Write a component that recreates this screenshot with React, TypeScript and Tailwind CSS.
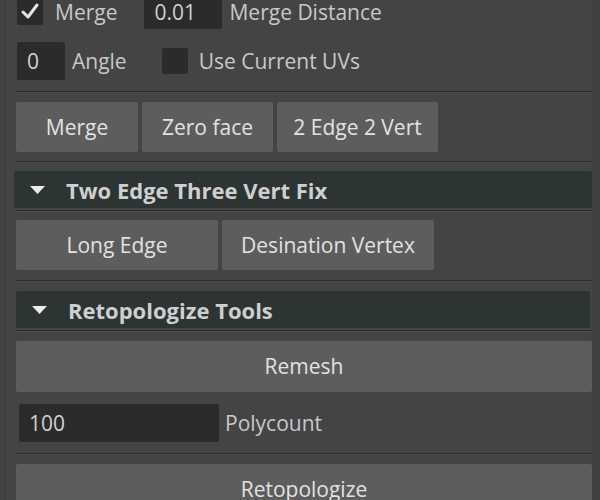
import React from 'react';

const font = { fontFamily: '"Open Sans", "Noto Sans", "Liberation Sans", sans-serif' };

function CheckBox({ checked }: { checked?: boolean }) {
    return (
        <div className="w-[26px] h-[26px] bg-[#2b2b2b] rounded-[2px] flex items-center justify-center shrink-0">
            {checked && (
                <svg width="20" height="20" viewBox="0 0 20 20">
                    <polyline points="3,10 8,15 17,3" fill="none" stroke="#e6e6e6" strokeWidth="3" strokeLinecap="round" strokeLinejoin="round" />
                </svg>
            )}
        </div>
    );
}

function Field({ value, className }: { value: string; className: string }) {
    return (
        <div className={`bg-[#2b2b2b] rounded-[2px] flex items-center pl-[10px] text-[#d2d2d2] shrink-0 ${className}`}>
            {value}
        </div>
    );
}

function Btn({ label, className }: { label: string; className: string }) {
    return (
        <div className={`bg-[#5d5d5d] rounded-[2px] flex items-center justify-center text-[#e2e2e2] h-[50px] shrink-0 ${className}`}>
            {label}
        </div>
    );
}

function Separator({ className = '' }: { className?: string }) {
    return <div className={`h-[2px] shrink-0 border-t border-[#2c2c2c] border-b border-b-[#4a4a4a] ${className}`} />;
}

function Header({ title, className = '' }: { title: string; className?: string }) {
    return (
        <div className={`h-[37px] shrink-0 bg-[#2c3434] rounded-[2px] flex items-center font-bold text-[22px] text-[#cfcfcf] ${className}`}>
            <svg width="15" height="8" viewBox="0 0 15 8" className="ml-[16px] mr-[21px]">
                <polygon points="0,0 15,0 7.5,8" fill="#ececec" />
            </svg>
            {title}
        </div>
    );
}

export default function App() {
    return (
        <div className="w-[600px] h-[500px] bg-[#444444] overflow-hidden flex text-[21px] leading-none" style={font}>
            <div className="w-[6px] bg-[#424242] border-r border-[#383838] shrink-0" />
            <div className="flex-1 flex flex-col pl-[9px] pr-[1px] -mt-[5px]">
                {/* Merge row */}
                <div className="h-[34px] shrink-0 flex items-center text-[#c8c8c8]">
                    <div className="ml-[2px]"><CheckBox checked /></div>
                    <span className="ml-[12px]">Merge</span>
                    <Field value="0.01" className="ml-[27px] w-[78px] h-[34px]" />
                    <span className="ml-[7px]">Merge Distance</span>
                </div>

                {/* Angle row */}
                <div className="h-[38px] shrink-0 mt-[13px] flex items-center text-[#c8c8c8]">
                    <Field value="0" className="ml-[2px] w-[48px] h-[38px]" />
                    <span className="ml-[7px]">Angle</span>
                    <div className="ml-[35px]"><CheckBox /></div>
                    <span className="ml-[11px]">Use Current UVs</span>
                </div>

                <Separator className="mt-[11px] ml-[1px]" />

                <div className="flex shrink-0 gap-[4px] mt-[9px] ml-[1px]">
                    <Btn label="Merge" className="w-[122px]" />
                    <Btn label="Zero face" className="w-[131px]" />
                    <Btn label="2 Edge 2 Vert" className="w-[161px]" />
                </div>

                <Separator className="mt-[9px] ml-[1px]" />

                <Header title="Two Edge Three Vert Fix" className="mt-[8px] -ml-[1px]" />
                <Separator className="mt-[2px] ml-[1px]" />

                <div className="flex shrink-0 gap-[4px] mt-[8px] ml-[1px]">
                    <Btn label="Long Edge" className="w-[202px]" />
                    <Btn label="Desination Vertex" className="w-[212px]" />
                </div>

                <Separator className="mt-[10px] ml-[1px]" />

                <Header title="Retopologize Tools" className="mt-[9px] ml-[1px] mr-[2px]" />
                <Separator className="mt-[2px] ml-[1px]" />

                <Btn label="Remesh" className="mt-[9px] ml-[1px] h-[51px]" />

                <div className="h-[38px] shrink-0 mt-[12px] flex items-center text-[#c8c8c8]">
                    <Field value="100" className="ml-[4px] w-[200px] h-[38px]" />
                    <span className="ml-[6px]">Polycount</span>
                </div>

                <Separator className="mt-[11px] ml-[1px]" />

                <Btn label="Retopologize" className="mt-[9px] ml-[1px]" />
            </div>
            <div className="w-[7px] bg-[#414141] border-l border-[#3a3a3a] shrink-0" />
        </div>
    );
}
